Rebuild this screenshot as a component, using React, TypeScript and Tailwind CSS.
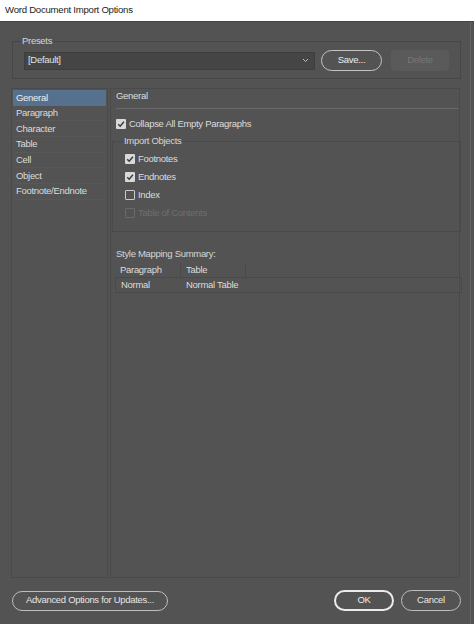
import React from "react";

const font = { fontFamily: '"Liberation Sans", Arial, sans-serif' };

function Check({ checked, disabled }: { checked?: boolean; disabled?: boolean }) {
  if (checked) {
    return (
      <span className="w-[10px] h-[10px] bg-[#d9d9d9] rounded-[1px] flex items-center justify-center shrink-0">
        <svg width="10" height="10" viewBox="0 0 10 10">
          <path d="M2.2 5.2 L4.2 7.2 L7.9 2.7" fill="none" stroke="#3b3b3b" strokeWidth="1.5" />
        </svg>
      </span>
    );
  }
  return (
    <span
      className={
        disabled
          ? "w-[10px] h-[10px] border border-[#6a6a6a] rounded-[1px] shrink-0"
          : "w-[10px] h-[10px] border border-[#c9c9c9] rounded-[1px] shrink-0"
      }
    />
  );
}

const navItems = ["General", "Paragraph", "Character", "Table", "Cell", "Object", "Footnote/Endnote"];

export default function App() {
  return (
    <div className="w-[474px] h-[624px] bg-[#535353] flex flex-col text-[9.5px] tracking-[-0.3px] text-[#dcdcdc]" style={font}>
      {/* title bar */}
      <div className="h-[22px] bg-white flex items-center pl-[5px] text-[#1c1c1c] text-[9.6px] tracking-[-0.25px] border-b border-[#444]">
        Word Document Import Options
      </div>

      <div className="flex-1 flex flex-col w-[471px] border-r border-[#656565]">
        {/* Presets */}
        <fieldset className="mt-[13px] ml-[12px] w-[447px] h-[44px] border border-[#474747] px-[11px] pb-[7px]">
          <legend className="px-[0px] -ml-[2px] leading-[12px] text-[#d6d6d6]">Presets</legend>
          <div className="flex items-center mt-[3px]">
            <div className="w-[291px] h-[18px] bg-[#454545] border border-[#3e3e3e] flex items-center justify-between pl-[3px] pr-[5px] text-[#e2e2e2]">
              <span>[Default]</span>
              <svg width="7" height="5" viewBox="0 0 7 5">
                <path d="M1 1 L3.5 3.5 L6 1" fill="none" stroke="#bdbdbd" strokeWidth="1" />
              </svg>
            </div>
            <div className="ml-[6px] w-[61px] h-[21px] rounded-full border border-[#c4c4c4] flex items-center justify-center text-[#ededed]">
              Save...
            </div>
            <div className="ml-[9px] w-[58px] h-[21px] rounded-[4px] bg-[#5a5a5a] flex items-center justify-center text-[#777777]">
              Delete
            </div>
          </div>
        </fieldset>

        {/* panels */}
        <div className="flex mt-[9px] ml-[11px] h-[490px]">
          <div className="w-[97px] border border-[#4a4a4a] p-[1px] flex flex-col">
            {navItems.map((n, i) => (
              <div
                key={n}
                className={
                  i === 0
                    ? "h-[15.7px] flex items-center pl-[3px] bg-[#56718d] text-[#eeeeee]"
                    : "h-[15.7px] flex items-center pl-[3px] border-b border-[#585858]"
                }
              >
                {n}
              </div>
            ))}
          </div>

          <div className="ml-[2px] w-[350px] border border-[#4a4a4a] flex flex-col px-[1px]">
            <div className="h-[20px] ml-[4px] border-b border-[#6a6a6a] pt-[1px] leading-[12px] text-[#dedede]">General</div>

            <div className="mt-[9px] ml-[4px] h-[12px] flex items-center gap-[3px]">
              <Check checked />
              <span>Collapse All Empty Paragraphs</span>
            </div>

            <fieldset className="mt-[5px] w-[349px] border border-[#4a4a4a] pl-[12px] pb-[9px]">
              <legend className="-ml-[1px] leading-[12px] px-[0px] text-[#d6d6d6]">Import Objects</legend>
              <div className="flex flex-col pt-[3px]">
                <div className="h-[18px] flex items-center gap-[3px]">
                  <Check checked />
                  <span>Footnotes</span>
                </div>
                <div className="h-[18px] flex items-center gap-[3px]">
                  <Check checked />
                  <span>Endnotes</span>
                </div>
                <div className="h-[18px] flex items-center gap-[3px]">
                  <Check />
                  <span>Index</span>
                </div>
                <div className="h-[18px] flex items-center gap-[3px]">
                  <Check disabled />
                  <span className="text-[#6f6f6f]">Table of Contents</span>
                </div>
              </div>
            </fieldset>

            <div className="mt-[16px] ml-[4px] leading-[12px] text-[#d6d6d6]">Style Mapping Summary:</div>

            <div className="mt-[3px] ml-[3px] w-[347px] flex flex-col">
              <div className="h-[14px] flex items-stretch">
                <div className="w-[66px] pl-[5px] flex items-center border-r border-[#4a4a4a]">Paragraph</div>
                <div className="w-[65px] pl-[5px] flex items-center border-r border-[#4a4a4a]">Table</div>
              </div>
              <div className="h-[16px] border border-[#4a4a4a] flex items-center">
                <div className="w-[66px] pl-[5px]">Normal</div>
                <div className="pl-[4px]">Normal Table</div>
              </div>
            </div>
          </div>
        </div>

        {/* bottom buttons */}
        <div className="flex items-center mt-[12px] ml-[12px] h-[21px]">
          <div className="w-[156px] h-[20px] rounded-full border border-[#bdbdbd] flex items-center justify-center text-[#e6e6e6]">
            Advanced Options for Updates...
          </div>
          <div className="ml-auto w-[60px] h-[21px] rounded-full border-[2px] border-[#ececec] flex items-center justify-center text-[#eeeeee]">
            OK
          </div>
          <div className="ml-[7px] mr-[9px] w-[60px] h-[21px] rounded-full border border-[#bdbdbd] flex items-center justify-center text-[#e6e6e6]">
            Cancel
          </div>
        </div>
      </div>
    </div>
  );
}
